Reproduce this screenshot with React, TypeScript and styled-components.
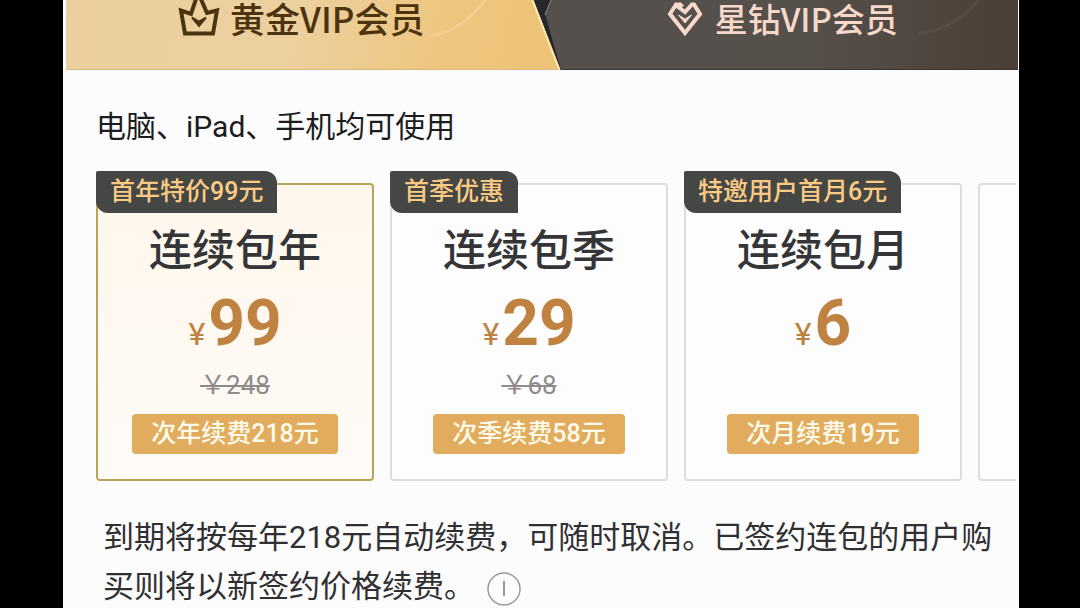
import React, { useState } from "react";
import styled, { createGlobalStyle } from "styled-components";

const GlobalStyle = createGlobalStyle`
  * { box-sizing: border-box; }
  html, body { margin: 0; background: #000; }
  body { font-family: Roboto, "Noto Sans CJK SC", sans-serif; overflow-x: hidden; }
  button { font: inherit; color: inherit; border: 0; padding: 0; margin: 0; background: none; cursor: pointer; }
`;

const Page = styled.div`
  display: flex;
  min-height: 100vh;
  padding: 0 61px 0 63px;
  background: #000;
`;

const Screen = styled.main`
  flex: 1;
  min-width: 0;
  background: #fdfcfd;
`;

const Tabs = styled.div`
  display: grid;
  grid-template-columns: 494fr 457fr;
  margin: 0 1px 0 3px;
`;

const Tab = styled.button<{ $tone: "gold" | "dark" }>`
  position: relative;
  display: flex;
  justify-content: center;
  gap: ${(p) => (p.$tone === "gold" ? 10 : 12)}px;
  padding: 0 ${(p) => (p.$tone === "gold" ? 24 : 14)}px 33px 0;
  align-items: center;
  font-family: "Noto Sans CJK SC", sans-serif;
  font-size: ${(p) => (p.$tone === "gold" ? 35 : 33)}px;
  line-height: 36px;
  font-weight: 500;
  white-space: nowrap;
  color: ${(p) => (p.$tone === "gold" ? "#4c3410" : "#f6d9ca")};
  background: ${(p) =>
    p.$tone === "gold"
      ? "linear-gradient(100deg, #ebcf9f 0%, #edd0a0 45%, #eec67f 75%, #eec376 100%)"
      : "linear-gradient(90deg, #55504c 0%, #56504b 55%, #4b3f36 100%)"};
  clip-path: ${(p) =>
    p.$tone === "gold" ? "polygon(0 0, calc(100% - 27px) 0, 100% 100%, 0 100%)" : "none"};
  border-bottom: 1px solid ${(p) => (p.$tone === "gold" ? "#d9b87c" : "#3b3531")};
  z-index: ${(p) => (p.$tone === "gold" ? 1 : 0)};

  & + & { margin-left: -30px; padding-left: 30px; }
`;

const Label = styled.span`
  position: relative;
`;

const Icon = styled.svg`
  flex: none;
  overflow: visible;
`;

const TabDecor = styled.svg`
  position: absolute;
  top: 0;
  right: 0;
  pointer-events: none;
`;

const Heading = styled.h1`
  margin: 0;
  padding: 37px 33px 0;
  font-size: 30px;
  line-height: 40px;
  font-weight: 400;
  color: #1c1c1e;
`;

const PlanList = styled.div`
  display: flex;
  gap: 16px;
  padding: 36px 0 0 33px;
  margin-right: 3px;
  overflow: hidden;
`;

const PlanCard = styled.button<{ $selected: boolean }>`
  position: relative;
  flex: 0 0 278px;
  display: flex;
  flex-direction: column;
  align-items: center;
  min-height: 298px;
  padding: 36px 0 25px;
  border: 2px solid ${(p) => (p.$selected ? "#bba35c" : "#dddcde")};
  border-radius: 4px;
  background: ${(p) => (p.$selected ? "linear-gradient(180deg, #fef7ec, #fefaf6)" : "#fefdfe")};
`;

const Badge = styled.span`
  position: absolute;
  top: -14px;
  left: -2px;
  padding: 0 14px;
  border-radius: 2px 12px 0 12px;
  background: #454744;
  color: #fbcb85;
  font-size: 25px;
  line-height: 42px;
  font-weight: 500;
  white-space: nowrap;
`;

const PlanName = styled.span`
  font-size: 43px;
  line-height: 60px;
  font-weight: 500;
  color: #353537;
`;

const Price = styled.span`
  display: flex;
  align-items: baseline;
  gap: 3px;
  margin-top: 11px;
  font-family: Roboto, sans-serif;
  font-size: 64px;
  line-height: 64px;
  font-weight: 700;
  color: #bf8240;
`;

const Currency = styled.span`
  font-size: 32px;
  line-height: 32px;
  font-weight: 400;
`;

const OldPrice = styled.s`
  height: 32px;
  margin: 13px 0;
  font-size: 26px;
  line-height: 32px;
  font-weight: 400;
  color: #8f8b8b;
`;

const Renewal = styled.span`
  padding: 0 19px;
  border-radius: 4px;
  background: #e2ac5e;
  color: #fffbea;
  font-size: 25px;
  line-height: 40px;
  font-weight: 500;
  white-space: nowrap;
`;

const Terms = styled.p`
  margin: 0;
  padding: 32px 24px 0 40px;
  font-size: 31px;
  line-height: 49px;
  color: #303032;
`;

const InfoButton = styled.button`
  display: inline-flex;
  margin-left: 12px;
  vertical-align: middle;
`;

type Plan = { name: string; badge?: string; price: string; oldPrice?: string; renewal: string };

const plans: Plan[] = [
  { name: "连续包年", badge: "首年特价99元", price: "99", oldPrice: "248", renewal: "次年续费218元" },
  { name: "连续包季", badge: "首季优惠", price: "29", oldPrice: "68", renewal: "次季续费58元" },
  { name: "连续包月", badge: "特邀用户首月6元", price: "6", renewal: "次月续费19元" },
];

function CrownIcon() {
  return (
    <Icon width="42" height="36" viewBox="0 0 42 36" fill="none" stroke="#4c3410" strokeWidth="4" aria-hidden="true">
      <path d="M19 -4L13 14L3 10.500L7 33.500H35L39 10.500L29 13L22 -3" />
      <path d="M14 17.500L21 21.500L28 17.500L21 26Z" fill="#4c3410" strokeWidth="2" />
    </Icon>
  );
}

function DiamondIcon() {
  return (
    <Icon width="36" height="36" viewBox="0 0 36 36" fill="none" stroke="#f6d9ca" strokeWidth="4" aria-hidden="true">
      <path d="M15.500 4L12 7.500L18 12L25 4.500H27L33 14L18 33L3 14L9 4.500H14" />
      <path d="M11.500 15L18 19L24.500 15L18 23Z" fill="#f6d9ca" strokeWidth="1" />
    </Icon>
  );
}

export default function App() {
  const [selected, setSelected] = useState(0);

  return (
    <>
      <GlobalStyle />
      <Page>
        <Screen>
          <Tabs role="tablist">
            <Tab $tone="gold" role="tab" aria-selected="true">
              <TabDecor width="160" height="70" viewBox="0 0 160 70" fill="none" aria-hidden="true">
                <path d="M30 36Q62 30 84 0" stroke="#f5dca8" strokeWidth="3" opacity="0.45" />
                <path d="M132 0L159 70" stroke="#fbe8b4" strokeWidth="3" />
              </TabDecor>
              <CrownIcon />
              <Label>黄金VIP会员</Label>
            </Tab>
            <Tab $tone="dark" role="tab" aria-selected="false">
              <TabDecor width="160" height="70" viewBox="0 0 160 70" fill="none" aria-hidden="true">
                <path d="M60 34Q100 28 120 0" stroke="#645850" strokeWidth="3" opacity="0.45" />
              </TabDecor>
              <TabDecor width="487" height="70" viewBox="0 0 487 70" fill="none" aria-hidden="true">
                <path d="M0 0H20L14 14L30 70H24Z" fill="#262729" />
                <path d="M20 0L14 15" stroke="#8a8886" strokeWidth="1" />
              </TabDecor>
              <DiamondIcon />
              <Label>星钻VIP会员</Label>
            </Tab>
          </Tabs>

          <Heading>电脑、iPad、手机均可使用</Heading>

          <PlanList>
            {plans.map((plan, i) => (
              <PlanCard key={plan.name} $selected={i === selected} aria-pressed={i === selected} onClick={() => setSelected(i)}>
                <Badge>{plan.badge}</Badge>
                <PlanName>{plan.name}</PlanName>
                <Price>
                  <Currency>¥</Currency>
                  {plan.price}
                </Price>
                <OldPrice>{plan.oldPrice && `￥${plan.oldPrice}`}</OldPrice>
                <Renewal>{plan.renewal}</Renewal>
              </PlanCard>
            ))}
            <PlanCard $selected={false} aria-label="更多套餐" />
          </PlanList>

          <Terms>
            到期将按每年218元自动续费，可随时取消。已签约连包的用户购买则将以新签约价格续费。
            <InfoButton aria-label="续费说明">
              <Icon width="34" height="34" viewBox="0 0 34 34" fill="none" stroke="#9a9898" aria-hidden="true">
                <circle cx="17" cy="17" r="16" strokeWidth="1.500" />
                <path d="M17 9V24" strokeWidth="2" />
              </Icon>
            </InfoButton>
          </Terms>
        </Screen>
      </Page>
    </>
  );
}
